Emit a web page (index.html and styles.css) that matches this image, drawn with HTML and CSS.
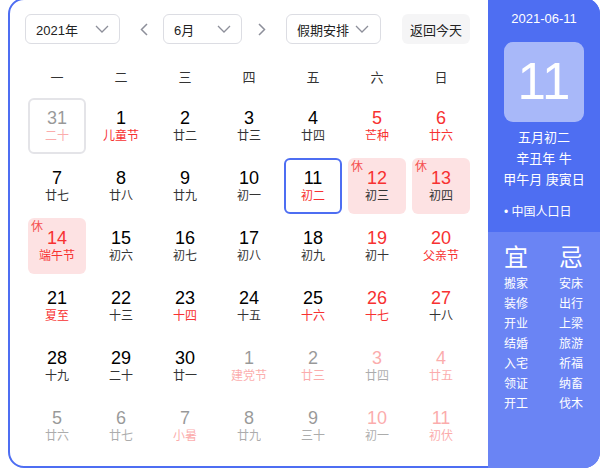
FILE: index.html
```html
<!DOCTYPE html>
<html lang="zh-CN">
<head>
<meta charset="utf-8">
<title>万年历</title>
<link rel="stylesheet" href="styles.css">
</head>
<body>
<div class="calendar">
  <div class="cal-main">
    <div class="toolbar">
      <div class="select select-year"><span>2021年</span><svg class="chev" viewBox="0 0 14 8"><path d="M1 1l6 6 6-6"/></svg></div>
      <svg class="nav nav-prev" viewBox="0 0 8 13"><path d="M7 1L1.5 6.5 7 12"/></svg>
      <div class="select select-month"><span>6月</span><svg class="chev" viewBox="0 0 14 8"><path d="M1 1l6 6 6-6"/></svg></div>
      <svg class="nav nav-next" viewBox="0 0 8 13"><path d="M1 1l5.5 5.5L1 12"/></svg>
      <div class="select select-holiday"><span>假期安排</span><svg class="chev" viewBox="0 0 14 8"><path d="M1 1l6 6 6-6"/></svg></div>
      <button class="btn-today">返回今天</button>
    </div>

    <div class="weekdays">
      <span>一</span><span>二</span><span>三</span><span>四</span><span>五</span><span>六</span><span>日</span>
    </div>

    <div class="days">
      <div class="day is-other is-picked"><div class="box"><b class="num">31</b><i class="lunar red">二十</i></div></div>
      <div class="day"><div class="box"><b class="num">1</b><i class="lunar red">儿童节</i></div></div>
      <div class="day"><div class="box"><b class="num">2</b><i class="lunar">廿二</i></div></div>
      <div class="day"><div class="box"><b class="num">3</b><i class="lunar">廿三</i></div></div>
      <div class="day"><div class="box"><b class="num">4</b><i class="lunar">廿四</i></div></div>
      <div class="day"><div class="box"><b class="num red">5</b><i class="lunar red">芒种</i></div></div>
      <div class="day"><div class="box"><b class="num red">6</b><i class="lunar red">廿六</i></div></div>

      <div class="day"><div class="box"><b class="num">7</b><i class="lunar">廿七</i></div></div>
      <div class="day"><div class="box"><b class="num">8</b><i class="lunar">廿八</i></div></div>
      <div class="day"><div class="box"><b class="num">9</b><i class="lunar">廿九</i></div></div>
      <div class="day"><div class="box"><b class="num">10</b><i class="lunar">初一</i></div></div>
      <div class="day is-today"><div class="box"><b class="num">11</b><i class="lunar red">初二</i></div></div>
      <div class="day is-rest"><div class="box"><em class="rest">休</em><b class="num red">12</b><i class="lunar">初三</i></div></div>
      <div class="day is-rest"><div class="box"><em class="rest">休</em><b class="num red">13</b><i class="lunar">初四</i></div></div>

      <div class="day is-rest"><div class="box"><em class="rest">休</em><b class="num red">14</b><i class="lunar red">端午节</i></div></div>
      <div class="day"><div class="box"><b class="num">15</b><i class="lunar">初六</i></div></div>
      <div class="day"><div class="box"><b class="num">16</b><i class="lunar">初七</i></div></div>
      <div class="day"><div class="box"><b class="num">17</b><i class="lunar">初八</i></div></div>
      <div class="day"><div class="box"><b class="num">18</b><i class="lunar">初九</i></div></div>
      <div class="day"><div class="box"><b class="num red">19</b><i class="lunar">初十</i></div></div>
      <div class="day"><div class="box"><b class="num red">20</b><i class="lunar red">父亲节</i></div></div>

      <div class="day"><div class="box"><b class="num">21</b><i class="lunar red">夏至</i></div></div>
      <div class="day"><div class="box"><b class="num">22</b><i class="lunar">十三</i></div></div>
      <div class="day"><div class="box"><b class="num">23</b><i class="lunar red">十四</i></div></div>
      <div class="day"><div class="box"><b class="num">24</b><i class="lunar">十五</i></div></div>
      <div class="day"><div class="box"><b class="num">25</b><i class="lunar red">十六</i></div></div>
      <div class="day"><div class="box"><b class="num red">26</b><i class="lunar red">十七</i></div></div>
      <div class="day"><div class="box"><b class="num red">27</b><i class="lunar">十八</i></div></div>

      <div class="day"><div class="box"><b class="num">28</b><i class="lunar">十九</i></div></div>
      <div class="day"><div class="box"><b class="num">29</b><i class="lunar">二十</i></div></div>
      <div class="day"><div class="box"><b class="num">30</b><i class="lunar">廿一</i></div></div>
      <div class="day is-other"><div class="box"><b class="num">1</b><i class="lunar red">建党节</i></div></div>
      <div class="day is-other"><div class="box"><b class="num">2</b><i class="lunar red">廿三</i></div></div>
      <div class="day is-other"><div class="box"><b class="num red">3</b><i class="lunar">廿四</i></div></div>
      <div class="day is-other"><div class="box"><b class="num red">4</b><i class="lunar red">廿五</i></div></div>

      <div class="day is-other"><div class="box"><b class="num">5</b><i class="lunar">廿六</i></div></div>
      <div class="day is-other"><div class="box"><b class="num">6</b><i class="lunar">廿七</i></div></div>
      <div class="day is-other"><div class="box"><b class="num">7</b><i class="lunar red">小暑</i></div></div>
      <div class="day is-other"><div class="box"><b class="num">8</b><i class="lunar">廿九</i></div></div>
      <div class="day is-other"><div class="box"><b class="num">9</b><i class="lunar">三十</i></div></div>
      <div class="day is-other"><div class="box"><b class="num red">10</b><i class="lunar">初一</i></div></div>
      <div class="day is-other"><div class="box"><b class="num red">11</b><i class="lunar red">初伏</i></div></div>
    </div>
  </div>

  <aside class="panel">
    <div class="panel-info">
      <div class="panel-date">2021-06-11</div>
      <div class="panel-big">11</div>
      <div class="panel-line panel-first">五月初二</div>
      <div class="panel-line">辛丑年 牛</div>
      <div class="panel-line">甲午月 庚寅日</div>
      <div class="panel-fest">• 中国人口日</div>
    </div>
    <div class="panel-almanac">
      <div class="alm-col">
        <div class="alm-head">宜</div>
        <div>搬家</div><div>装修</div><div>开业</div><div>结婚</div><div>入宅</div><div>领证</div><div>开工</div>
      </div>
      <div class="alm-col">
        <div class="alm-head">忌</div>
        <div>安床</div><div>出行</div><div>上梁</div><div>旅游</div><div>祈福</div><div>纳畜</div><div>伐木</div>
      </div>
    </div>
  </aside>
</div>
</body>
</html>
```

FILE: styles.css
```css
* {
  box-sizing: border-box;
}

html, body {
  margin: 0;
  padding: 0;
  background: #fff;
  overflow: hidden;
}

body {
  font-family: "Liberation Sans", "Noto Sans CJK SC", sans-serif;
  color: #333;
}

.calendar {
  display: flex;
  width: 592px;
  height: 470px;
  margin: -2px 0 0 8px;
  border: 2px solid #4e6ef2;
  border-radius: 16px;
  background: #fff;
}

.cal-main {
  flex: 1;
  padding: 14px 0 0 15px;
}

/* toolbar */
.toolbar {
  display: flex;
  align-items: center;
  height: 30px;
}

.select {
  display: flex;
  align-items: center;
  justify-content: space-between;
  height: 30px;
  padding: 0 10px 0 10px;
  border: 1px solid #dcdde3;
  border-radius: 6px;
  font-size: 13px;
  color: #222;
}

.select-year { width: 95px; }
.select-month { width: 79px; }
.select-holiday { width: 95px; padding-right: 11px; }

.chev {
  width: 14px;
  height: 8px;
  fill: none;
  stroke: #8d8f9a;
  stroke-width: 1.3;
}

.nav {
  width: 8px;
  height: 13px;
  fill: none;
  stroke: #8d8f9a;
  stroke-width: 1.5;
}

.nav-prev { margin: 0 15px 0 20px; }
.nav-next { margin: 0 20px 0 16px; }

.btn-today {
  margin-left: 21px;
  height: 30px;
  width: 68px;
  padding: 0;
  border: 0;
  border-radius: 6px;
  background: #f5f5f6;
  font-family: inherit;
  font-size: 13px;
  color: #222;
}

/* weekday header */
.weekdays {
  display: grid;
  grid-template-columns: repeat(7, 64px);
  height: 37px;
  margin-top: 14px;
  align-items: center;
  font-size: 13px;
  color: #333;
  text-align: center;
}

/* day grid */
.days {
  display: grid;
  grid-template-columns: repeat(7, 64px);
  grid-auto-rows: 60px;
}

.day {
  padding: 3px;
}

.box {
  position: relative;
  display: flex;
  flex-direction: column;
  align-items: center;
  height: 56px;
  width: 58px;
  padding-top: 8px;
  border-radius: 6px;
  border: 2px solid transparent;
}

.num {
  font-weight: normal;
  font-size: 18px;
  line-height: 20px;
  color: #000;
}

.lunar {
  font-style: normal;
  font-size: 12px;
  line-height: 17px;
  color: #333;
}

.num.red,
.lunar.red {
  color: #f73131;
}

.is-other .num,
.is-other .lunar {
  opacity: 0.4;
}

.is-picked .box {
  border-color: #e4e4e8;
}

.is-today .box {
  border-color: #4e6ef2;
}

.is-rest .box {
  background: #fde2e3;
}

.rest {
  position: absolute;
  left: 1px;
  top: 0;
  font-style: normal;
  font-size: 12px;
  line-height: 14px;
  color: #f55050;
}

/* right-hand info panel */
.panel {
  display: flex;
  flex-direction: column;
  width: 112px;
  margin: -2px -2px -2px 0;
  border-radius: 0 16px 16px 0;
  overflow: hidden;
  color: #fff;
  text-align: center;
}

.panel-info {
  height: 234px;
  padding-top: 11px;
  background: #4e6ef2;
}

.panel-date {
  font-size: 13px;
  line-height: 20px;
}

.panel-big {
  width: 80px;
  height: 80px;
  margin: 13px auto 0;
  border-radius: 9px;
  background: #a8b8f9;
  font-size: 51px;
  line-height: 80px;
}

.panel-line {
  font-size: 13px;
  line-height: 21px;
}

.panel-first {
  margin-top: 5px;
}

.panel-fest {
  margin-top: 12px;
  padding-left: 16px;
  text-align: left;
  font-size: 12px;
  line-height: 20px;
}

.panel-almanac {
  flex: 1;
  display: grid;
  grid-template-columns: 24px 24px;
  column-gap: 31px;
  padding: 13px 0 0 16px;
  background: #6a84f4;
  font-size: 12px;
  line-height: 20px;
}

.alm-head {
  font-size: 24px;
  line-height: 26px;
  margin-bottom: 3px;
}
```
